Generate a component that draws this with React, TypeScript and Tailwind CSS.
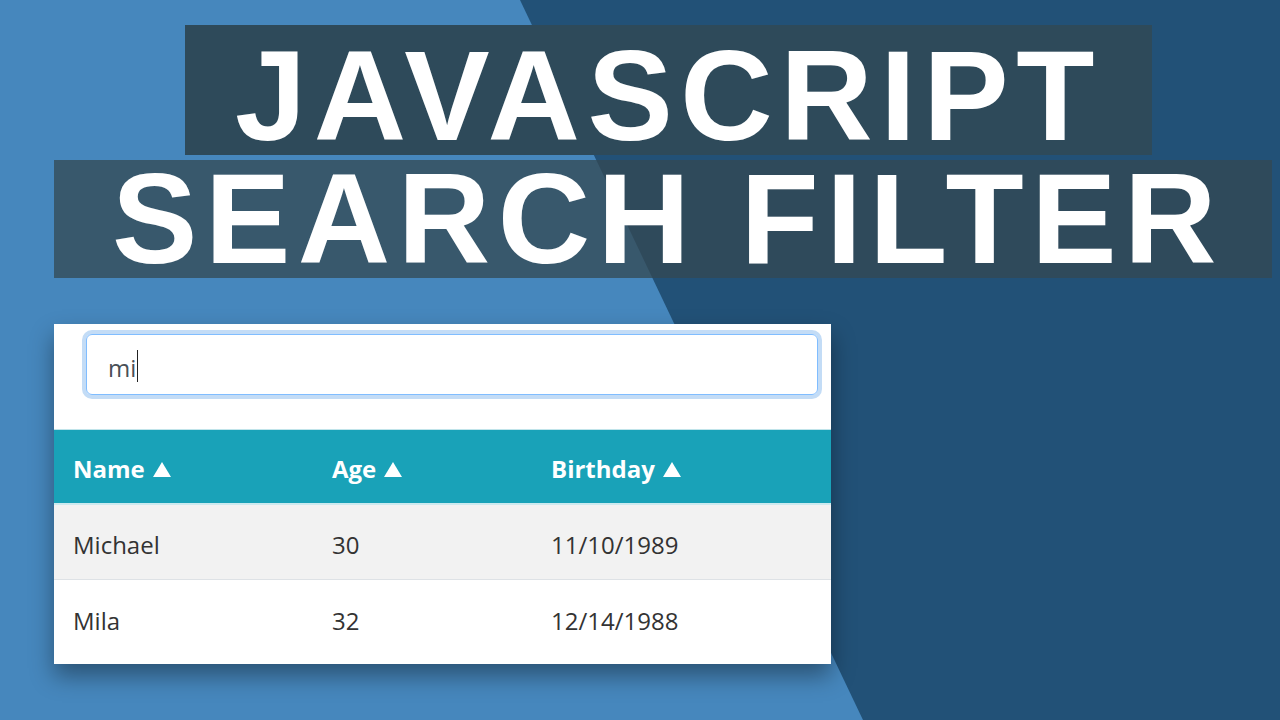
import React from "react";

const Tri = () => (
  <svg width="18" height="15" viewBox="0 0 18 15" className="inline-block ml-[8px] mb-[3px]">
    <polygon points="9,0 18,15 0,15" fill="white" />
  </svg>
);

const rows = [
  { name: "Michael", age: "30", birthday: "11/10/1989" },
  { name: "Mila", age: "32", birthday: "12/14/1988" },
];

export default function App() {
  return (
    <div className="relative w-[1280px] h-[720px] overflow-hidden bg-[#4687bd]">
      <svg className="absolute inset-0" width="1280" height="720" viewBox="0 0 1280 720">
        <polygon points="520,0 1280,0 1280,720 863,720" fill="#225177" />
      </svg>
      <div className="relative flex flex-col">
        <div className="mt-[25px] ml-[185px] w-[967px] h-[130px] bg-[#2e4a5a] pl-[50px] pt-[21px]">
          <div className="text-white font-bold text-[128px] leading-[100px] tracking-[7.5px] whitespace-nowrap [font-family:'Liberation_Sans',Arial,sans-serif]">
            JAVASCRIPT
          </div>
        </div>
        <div className="mt-[5px] ml-[54px] w-[1218px] h-[118px] bg-[rgba(52,72,81,0.75)] pl-[58px] pt-[9px]">
          <div className="text-white font-bold text-[128px] leading-[100px] tracking-[7.5px] whitespace-nowrap [font-family:'Liberation_Sans',Arial,sans-serif]">
            SEARCH FILTER
          </div>
        </div>
        <div className="mt-[46px] ml-[54px] w-[777px] h-[340px] bg-white shadow-[0_12px_22px_rgba(0,0,0,0.38)] pt-[10px] [font-family:'Open_Sans',sans-serif]">
          <div className="ml-[32px] w-[732px] h-[61px] border border-[#80bdff] rounded-[6px] ring-[4px] ring-[#c3dcf6] flex items-center pl-[21px] pt-[6px] text-[24px] text-[#495057]">
            <span>mi</span>
            <span className="inline-block w-px h-[32px] bg-[#222] ml-px mb-[4px]"></span>
          </div>
          <div className="mt-[34px] border-t border-[#c0e4ea]">
            <div className="grid grid-cols-[260px_219px_1fr] h-[75px] items-center bg-[#19a2b8] text-white font-bold text-[24px] border-b-2 border-[#cdeaef] pt-[4px]">
              <div className="pl-[19px]">Name<Tri /></div>
              <div className="pl-[18px]">Age<Tri /></div>
              <div className="pl-[18px]">Birthday<Tri /></div>
            </div>
            {rows.map((r, i) => (
              <div
                key={r.name}
                className={
                  i === 0
                    ? "grid grid-cols-[260px_219px_1fr] h-[75px] items-center bg-[#f2f2f2] border-b border-[#dee2e6] pt-[6px] text-[24px] text-[#333]"
                    : "grid grid-cols-[260px_219px_1fr] h-[75px] items-center bg-white pt-[6px] text-[24px] text-[#333]"
                }
              >
                <div className="pl-[19px]">{r.name}</div>
                <div className="pl-[18px]">{r.age}</div>
                <div className="pl-[18px]">{r.birthday}</div>
              </div>
            ))}
          </div>
        </div>
      </div>
    </div>
  );
}
